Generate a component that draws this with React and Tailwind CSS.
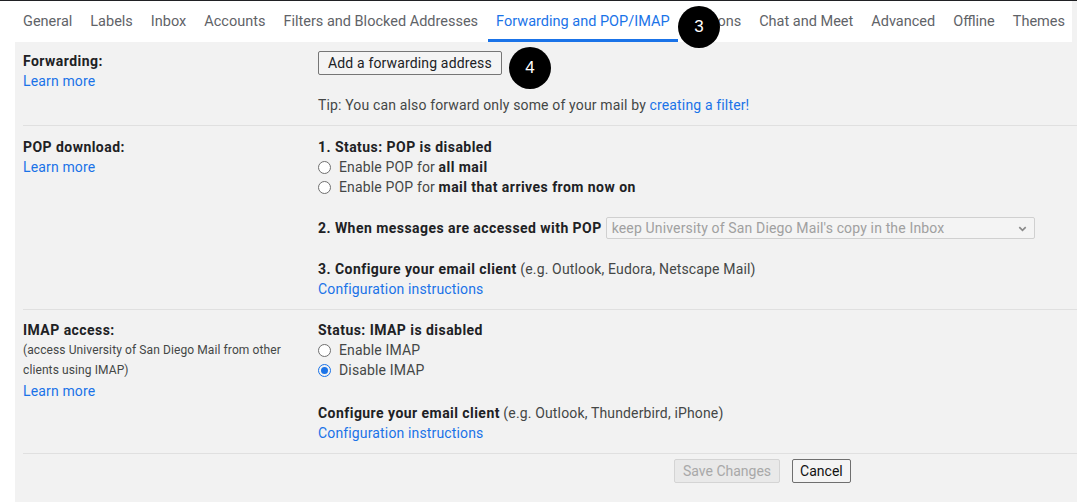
import React from 'react'

const TABS = [
  'General', 'Labels', 'Inbox', 'Accounts', 'Filters and Blocked Addresses',
  'Forwarding and POP/IMAP', 'Add-ons', 'Chat and Meet', 'Advanced', 'Offline', 'Themes',
]
const ACTIVE = 'Forwarding and POP/IMAP'

function Badge({ n, className }) {
  return (
    <div className={`absolute w-[42px] h-[42px] rounded-full bg-black text-white flex items-center justify-center text-[17px] font-['Liberation_Sans',sans-serif] ${className}`}>
      {n}
    </div>
  )
}

function Radio({ checked }) {
  return checked ? (
    <span className="w-[13px] h-[13px] rounded-full border-[1.5px] border-[#1a73e8] flex items-center justify-center shrink-0">
      <span className="w-[7px] h-[7px] rounded-full bg-[#1a73e8]" />
    </span>
  ) : (
    <span className="w-[13px] h-[13px] rounded-full border border-[#6f6f6f] bg-white shrink-0" />
  )
}

function Option({ checked, children }) {
  return (
    <div className="flex items-center h-5 gap-[8px]">
      <Radio checked={checked} />
      <span className="text-[#444746] tracking-[0.15px]">{children}</span>
    </div>
  )
}

function Link({ children }) {
  return <span className="text-[#1a73e8] tracking-[0.15px]">{children}</span>
}

function B({ children }) {
  return <b className="font-bold text-[#202124] tracking-[0.45px]">{children}</b>
}

function Row({ left, children, className = '' }) {
  return (
    <div className={`flex border-b border-[#e0e0e0] ${className}`}>
      <div className="w-[295px] shrink-0">{left}</div>
      <div className="flex-1">{children}</div>
    </div>
  )
}

export default function App() {
  return (
    <div className="relative w-[1077px] h-[502px] bg-white overflow-hidden font-['Roboto',sans-serif] text-[14px] leading-5 text-[#202124]">
      <div className="h-px bg-[#202124]" />
      <div className="flex">
        <div className="w-[1072px] shrink-0 h-[41px] bg-white flex items-stretch pl-[15px] overflow-hidden">
          {TABS.map((t) => (
            <div
              key={t}
              className={`shrink-0 whitespace-nowrap px-2 mr-[2px] pt-[3px] flex items-center text-[14.5px] border-b-[3px] ${t === ACTIVE ? 'text-[#1a73e8] border-[#1a73e8]' : 'text-[#5f6368] border-transparent'}`}
            >
              {t}
            </div>
          ))}
        </div>
        <div className="flex-1 bg-[#f2f2f2]" />
      </div>

      <div className="ml-[15px] bg-[#f2f2f2] h-[460px] pl-2">
        <Row
          className="pt-[9px] pb-[10px]"
          left={<>
            <div><B>Forwarding:</B></div>
            <Link>Learn more</Link>
          </>}
        >
          <button className="h-[24px] px-[9px] border border-[#767676] rounded-[2px] bg-[#f4f4f4] text-[#202124] font-['Roboto',sans-serif] text-[14px] leading-5 tracking-[0.15px]">
            Add a forwarding address
          </button>
          <div className="mt-5 text-[#444746] tracking-[0.15px]">
            Tip: You can also forward only some of your mail by <Link>creating a filter!</Link>
          </div>
        </Row>

        <Row
          className="pt-[11px] pb-[10px]"
          left={<>
            <div><B>POP download:</B></div>
            <Link>Learn more</Link>
          </>}
        >
          <div><B>1. Status: POP is disabled</B></div>
          <Option>Enable POP for <B>all mail</B></Option>
          <Option>Enable POP for <B>mail that arrives from now on</B></Option>
          <div className="mt-5 flex items-center h-[22px]">
            <span className="mr-[4px]"><B>2. When messages are accessed with POP</B></span>
            <div className="w-[429px] h-[22px] border border-[#d0d0d0] bg-[#f4f4f4] rounded-[2px] flex items-center justify-between pl-[5px] pr-[6px] text-[#a0a0a0] tracking-[0.15px]">
              <span>keep University of San Diego Mail's copy in the Inbox</span>
              <svg width="11" height="11" viewBox="0 0 12 12" fill="none" stroke="#8a8a8a" strokeWidth="1.8">
                <path d="M2.5 4.5 L6 8 L9.5 4.5" />
              </svg>
            </div>
          </div>
          <div className="mt-5">
            <B>3. Configure your email client</B> <span className="text-[#444746] tracking-[0.15px]">(e.g. Outlook, Eudora, Netscape Mail)</span>
          </div>
          <Link>Configuration instructions</Link>
        </Row>

        <Row
          className="pt-[10px] pb-[10px]"
          left={<>
            <div><B>IMAP access:</B></div>
            <div className="text-[12px] leading-5 text-[#444746] tracking-[0.1px]">(access University of San Diego Mail from other<br />clients using IMAP)</div>
            <div className="mt-px"><Link>Learn more</Link></div>
          </>}
        >
          <div><B>Status: IMAP is disabled</B></div>
          <Option>Enable IMAP</Option>
          <Option checked>Disable IMAP</Option>
          <div className="mt-[23px]">
            <B>Configure your email client</B> <span className="text-[#444746] tracking-[0.15px]">(e.g. Outlook, Thunderbird, iPhone)</span>
          </div>
          <Link>Configuration instructions</Link>
        </Row>

        <div className="flex gap-[12px] pl-[651px] pt-[5px]">
          <button disabled className="h-[24px] px-[8px] border border-[#d4d4d4] rounded-[2px] bg-[#e9e9e9] text-[#a8a8a8] font-['Roboto',sans-serif] text-[14px]">
            Save Changes
          </button>
          <button className="h-[24px] px-[7px] border border-[#6f6f6f] rounded-[2px] bg-[#f4f4f4] text-[#111] font-['Roboto',sans-serif] text-[14px]">
            Cancel
          </button>
        </div>
      </div>

      <Badge n="3" className="left-[678px] top-[6px]" />
      <Badge n="4" className="left-[509px] top-[47px]" />
    </div>
  )
}
